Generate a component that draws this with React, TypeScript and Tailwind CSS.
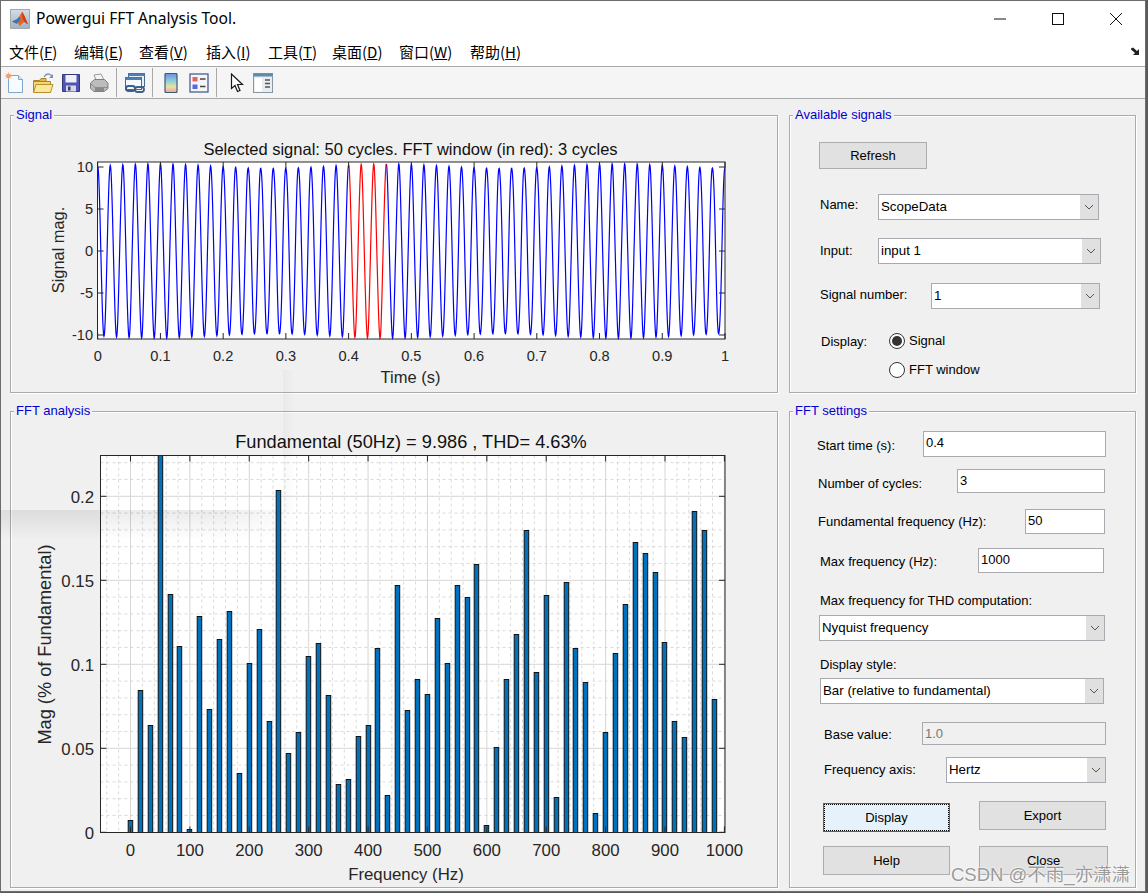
import type { ReactNode } from "react";

const SANS = "[font-family:'Liberation_Sans',Arial,sans-serif]";

const bars = [
  0.0075, 0.085, 0.064, 0.3, 0.142, 0.111, 0.002, 0.1285, 0.0735, 0.115, 0.132, 0.0355, 0.101, 0.121, 0.066, 0.204,
  0.047, 0.06, 0.105, 0.1125, 0.0815, 0.029, 0.032, 0.0575, 0.064, 0.1095, 0.0225, 0.1475, 0.073, 0.091, 0.0825,
  0.1275, 0.1005, 0.147, 0.14, 0.1595, 0.0045, 0.051, 0.0915, 0.118, 0.18, 0.0955, 0.141, 0.021, 0.149, 0.11, 0.0895,
  0.0115, 0.0595, 0.1065, 0.136, 0.173, 0.1665, 0.155, 0.1135, 0.0665, 0.057, 0.191, 0.18, 0.0795,
];

const menus = [
  ["文件(", "F", ")", "w-[65px]"],
  ["编辑(", "E", ")", "w-[65px]"],
  ["查看(", "V", ")", "w-[67px]"],
  ["插入(", "I", ")", "w-[62px]"],
  ["工具(", "T", ")", "w-[64px]"],
  ["桌面(", "D", ")", "w-[67px]"],
  ["窗口(", "W", ")", "w-[71px]"],
  ["帮助(", "H", ")", "w-[60px]"],
];

// signal trace, screen coordinates
const sigX = (t: number) => 97.7 + t * 627.3;
const sigY = (v: number) => 251 - v * 8.4;
const wave = (from: number, to: number) => {
  const pts: string[] = [];
  const n = Math.round((to - from) / 0.0005);
  for (let i = 0; i <= n; i++) {
    const t = from + i * 0.0005;
    let v = 10.1 * Math.cos(2 * Math.PI * 50 * t) + 0.3 * Math.sin(2 * Math.PI * 150 * t + 1.1) * Math.sin(17 * t);
    if (t < 0.0005) v = 9.5;
    pts.push(`${sigX(t).toFixed(2)},${sigY(v).toFixed(2)}`);
  }
  return pts.join(" ");
};

const SignalPlot = () => {
  const xt = [0, 0.1, 0.2, 0.3, 0.4, 0.5, 0.6, 0.7, 0.8, 0.9, 1];
  const yt = [10, 5, 0, -5, -10];
  return (
    <svg viewBox="11 116 766 276" className="block h-[276px] w-[766px]" fontFamily="'Liberation Sans', Arial, sans-serif">
      <rect x="97.5" y="162" width="627.5" height="177" fill="#fff" />
      <polyline points={wave(0, 0.4)} fill="none" stroke="#0000ff" strokeWidth="1.2" />
      <polyline points={wave(0.46, 1)} fill="none" stroke="#0000ff" strokeWidth="1.2" />
      <polyline points={wave(0.4, 0.46)} fill="none" stroke="#ff0000" strokeWidth="1.2" />
      {xt.map((t) => (
        <g key={t}>
          <path d={`M${sigX(t)} 162v6M${sigX(t)} 339v-6`} stroke="#262626" />
          <text x={sigX(t)} y="361" textAnchor="middle" fontSize="14.6" fill="#262626">
            {t}
          </text>
        </g>
      ))}
      {yt.map((v) => (
        <g key={v}>
          <path d={`M97.5 ${sigY(v)}h6M725 ${sigY(v)}h-6`} stroke="#262626" />
          <text x="93" y={sigY(v) + 5} textAnchor="end" fontSize="14.6" fill="#262626">
            {v}
          </text>
        </g>
      ))}
      <rect x="97.5" y="162" width="627.5" height="177" fill="none" stroke="#262626" />
      <text x="410.5" y="155" textAnchor="middle" fontSize="16.5" fill="#111">
        Selected signal: 50 cycles. FFT window (in red): 3 cycles
      </text>
      <text x="410.5" y="383" textAnchor="middle" fontSize="16.5" fill="#262626">
        Time (s)
      </text>
      <text transform="translate(64 250) rotate(-90)" textAnchor="middle" fontSize="16.4" fill="#262626">
        Signal mag.
      </text>
    </svg>
  );
};

const FftPlot = () => {
  const fx = (f: number) => 130.5 + f * 0.5939;
  const fy = (m: number) => 832.3 - m * 1680;
  const majorX = [0, 100, 200, 300, 400, 500, 600, 700, 800, 900, 1000];
  const minorX: number[] = [];
  for (let f = -40; f < 1000; f += 20) if (f % 100 !== 0) minorX.push(f);
  const majorY = [0.05, 0.1, 0.15, 0.2];
  const minorY: number[] = [];
  for (let i = 1; i <= 22; i++) if (i % 5 !== 0) minorY.push(i / 100);
  return (
    <svg viewBox="11 412 766 474" className="block h-[474px] w-[766px]" fontFamily="'Liberation Sans', Arial, sans-serif">
      <rect x="100.5" y="455.5" width="624.5" height="377" fill="#fff" />
      {minorX.map((f) => (
        <line key={f} x1={fx(f)} x2={fx(f)} y1="455.5" y2="832.5" stroke="#dadada" strokeDasharray="3 3" />
      ))}
      {minorY.map((m) => (
        <line key={m} x1="100.5" x2="725" y1={fy(m)} y2={fy(m)} stroke="#dadada" strokeDasharray="3 3" />
      ))}
      {majorX.map((f) => (
        <line key={f} x1={fx(f)} x2={fx(f)} y1="455.5" y2="832.5" stroke="#d6d6d6" />
      ))}
      {majorY.map((m) => (
        <line key={m} x1="100.5" x2="725" y1={fy(m)} y2={fy(m)} stroke="#d6d6d6" />
      ))}
      <clipPath id="fftclip">
        <rect x="100.5" y="455.5" width="624.5" height="377" />
      </clipPath>
      {bars.map((m, k) => {
        const top = Math.round(Math.max(fy(m), 450)) + 0.5;
        return (
          <rect
            key={k}
            x={Math.floor(130.5 + k * 9.898 - 2) + 0.2}
            y={top}
            width="4.5"
            height={832.5 - top}
            fill="#0072bd"
            stroke="#111"
            strokeWidth="1"
            clipPath="url(#fftclip)"
          />
        );
      })}
      {majorX.map((f) => (
        <g key={f}>
          <path d={`M${fx(f)} 455.5v6M${fx(f)} 832.5v-6`} stroke="#262626" />
          <text x={fx(f)} y="856" textAnchor="middle" fontSize="16.8" fill="#262626">
            {f}
          </text>
        </g>
      ))}
      {[0, ...majorY].map((m) => (
        <g key={m}>
          <path d={`M100.5 ${fy(m)}h6M725 ${fy(m)}h-6`} stroke="#262626" />
          <text x="94" y={fy(m) + 7} textAnchor="end" fontSize="16.8" fill="#262626">
            {m}
          </text>
        </g>
      ))}
      <rect x="100.5" y="455.5" width="624.5" height="377" fill="none" stroke="#262626" />
      <text x="411" y="448" textAnchor="middle" fontSize="18.2" fill="#111">
        Fundamental (50Hz) = 9.986 , THD= 4.63%
      </text>
      <text x="406" y="880" textAnchor="middle" fontSize="16.8" fill="#262626">
        Frequency (Hz)
      </text>
      <text transform="translate(51 644.500) rotate(-90)" textAnchor="middle" fontSize="18.2" fill="#262626">
        Mag (% of Fundamental)
      </text>
    </svg>
  );
};

const Panel = ({ title, className, children }: { title: string; className: string; children: ReactNode }) => (
  <div
    className={`relative border border-[#ababab] shadow-[inset_1px_1px_0_#fff,1px_1px_0_#fff] ${className}`}
  >
    <span className="absolute left-[3px] top-[-9px] bg-[#f0f0f0] px-[2px] text-[13px] leading-[16px] text-[#0000d0]">
      {title}
    </span>
    {children}
  </div>
);

const Label = ({ className, children }: { className: string; children: ReactNode }) => (
  <span className={`shrink-0 text-[13px] leading-[16px] text-black ${className}`}>{children}</span>
);

const Combo = ({ className, value }: { className: string; value: string }) => (
  <div className={`flex shrink-0 items-stretch border border-[#a9a9b0] bg-white ${className}`}>
    <span className="flex-1 pl-[2px] text-[13.3px] leading-[24px] text-black">{value}</span>
    <span className="flex w-[18px] items-center justify-center bg-[#e0e0e0]">
      <svg width="10" height="6" viewBox="0 0 10 6">
        <path d="M1 1l4 4 4-4" fill="none" stroke="#555" strokeWidth="1" />
      </svg>
    </span>
  </div>
);

const Field = ({ className, value, off }: { className: string; value: string; off?: boolean }) => (
  <div
    className={`shrink-0 border border-[#a9a9b0] pl-[2px] text-[13px] leading-[22px] ${
      off ? "bg-[#f0f0f0] text-[#777]" : "bg-white text-black"
    } ${className}`}
  >
    {value}
  </div>
);

const Btn = ({ className, children }: { className: string; children: ReactNode }) => (
  <button className={`shrink-0 border border-[#adadad] bg-[#e1e1e1] text-center text-[13px] text-black ${className}`}>
    {children}
  </button>
);

const Sep = ({ className }: { className: string }) => <div className={`h-[29px] w-px bg-[#a8a8a8] ${className}`} />;

const Cell = ({ className, children }: { className: string; children: ReactNode }) => (
  <div className={`flex shrink-0 justify-center ${className}`}>{children}</div>
);

const MatlabLogo = () => (
  <svg width="20" height="20" viewBox="0 0 20 20">
    <defs>
      <linearGradient id="tile" x1="0" y1="0" x2="0" y2="1">
        <stop offset="0" stopColor="#d5dde6" />
        <stop offset="1" stopColor="#9fb2c6" />
      </linearGradient>
    </defs>
    <rect x="0.5" y="0.5" width="19" height="19" fill="url(#tile)" stroke="#a8a8a8" />
    <path d="M2 12.5l5-2.2 2.2-2.6 3-5.2 2.5 5 3.3 8-3.8-2.8-2 2-2.4 2.3-2-3.2z" fill="#e8622a" />
    <path d="M2 12.5l5-2.2 2.2-2.6 1.3 2.2-2.6 3.6-1 1.6z" fill="#3277b5" />
    <path d="M12.2 2.5l2.5 5 3.3 8-3.8-2.8-1.8-4.6z" fill="#c7401c" />
  </svg>
);

const ToolIcons = {
  page: (
    <svg width="22" height="22" viewBox="0 0 22 22">
      <path d="M4.5 3.5h10l4 4v13h-14z" fill="#f6fbff" stroke="#7fa6cf" />
      <path d="M14.5 3.5v4h4" fill="#d6e6f5" stroke="#7fa6cf" />
      <circle cx="4.5" cy="4" r="2.2" fill="#f08a50" />
      <path d="M4.5 0.5v7M1 4h7M2 1.5l5 5M7 1.5l-5 5" stroke="#f5a676" strokeWidth="0.8" />
    </svg>
  ),
  folder: (
    <svg width="22" height="22" viewBox="0 0 22 22">
      <path d="M1.5 8.5h6l1.5-2h5v3h-12.500z" fill="#e8b93e" stroke="#a9862c" />
      <path d="M1.500 20.500v-11h17v11z" fill="#f3d775" stroke="#a9862c" />
      <path d="M1.500 20.500l2.500-8h17l-2.500 8z" fill="#fbe89a" stroke="#b5922f" />
      <path d="M12 5c1.500-2.500 4-3.500 6-2.500l2 1.500" fill="none" stroke="#7c93ad" strokeWidth="1.300" />
      <path d="M21 2v4h-4z" fill="#7c93ad" />
    </svg>
  ),
  floppy: (
    <svg width="20" height="20" viewBox="0 0 20 20">
      <path d="M1.500 1.500h17v17h-17z" fill="#4f55b0" stroke="#33387c" />
      <rect x="4.500" y="2" width="11" height="7.500" fill="#eef1fb" />
      <rect x="5" y="12.500" width="10" height="6" fill="#d5d8e6" />
      <rect x="7" y="13.500" width="2.500" height="4" fill="#33387c" />
    </svg>
  ),
  printer: (
    <svg width="20" height="20" viewBox="0 0 20 20">
      <path d="M5 2l7-1 3 6H7z" fill="#f2f4f6" stroke="#9a9a9a" />
      <path d="M1.500 10l4-3.500h10l3.500 3.500v5.500l-4 3h-10l-3.500-3z" fill="#bcbcbc" stroke="#7f7f7f" />
      <path d="M2 11l4 3.500h13" fill="none" stroke="#8d8d8d" />
      <rect x="6" y="15" width="9" height="3" fill="#8a8a8a" />
    </svg>
  ),
  link: (
    <svg width="22" height="22" viewBox="0 0 22 22">
      <rect x="4.500" y="1.500" width="16" height="13" fill="#e9eef5" stroke="#4c678a" />
      <rect x="4.500" y="1.500" width="16" height="2.500" fill="#4c7fb5" />
      <rect x="1.500" y="5.500" width="16" height="12" fill="#f4f7fb" stroke="#4c678a" />
      <rect x="1.500" y="5.500" width="16" height="2.500" fill="#4c7fb5" />
      <rect x="2" y="14" width="9" height="5" rx="2.500" fill="none" stroke="#3d5f8a" strokeWidth="1.800" />
      <rect x="11" y="15" width="9" height="5" rx="2.500" fill="none" stroke="#3d5f8a" strokeWidth="1.800" />
    </svg>
  ),
  colorbar: (
    <svg width="14" height="20" viewBox="0 0 14 20">
      <defs>
        <linearGradient id="cbar" x1="0" y1="0" x2="0" y2="1">
          <stop offset="0" stopColor="#6a8fe0" />
          <stop offset="0.4" stopColor="#8fd0d8" />
          <stop offset="0.7" stopColor="#e9e3a0" />
          <stop offset="1" stopColor="#f0a0a0" />
        </linearGradient>
      </defs>
      <rect x="1" y="0.500" width="12" height="19" rx="1" fill="url(#cbar)" stroke="#3f5878" strokeWidth="1.200" />
    </svg>
  ),
  legend: (
    <svg width="20" height="20" viewBox="0 0 20 20">
      <rect x="1" y="1" width="18" height="18" fill="#f5f6fb" stroke="#4a5f8f" strokeWidth="1.300" />
      <rect x="3.500" y="4" width="5" height="4.500" fill="#e8605f" />
      <rect x="3.500" y="11.500" width="5" height="4.500" fill="#5a68e0" />
      <path d="M11 6h5.500M11 13.500h5.500" stroke="#444" strokeWidth="1.300" />
    </svg>
  ),
  pointer: (
    <svg width="14" height="20" viewBox="0 0 14 20">
      <path d="M1.500 1v14.500l3.500-3 2.500 6 2.500-1-2.500-6h5z" fill="#fff" stroke="#1a1a1a" strokeWidth="1.200" />
    </svg>
  ),
  tools: (
    <svg width="20" height="20" viewBox="0 0 20 20">
      <rect x="0.500" y="0.500" width="19" height="19" fill="#e9edf0" stroke="#8a97a3" />
      <rect x="0.500" y="0.500" width="19" height="3" fill="#5f8aa8" />
      <rect x="2" y="5" width="7" height="13.500" fill="#fff" />
      <path d="M12 7h5M12 10.500h5M12 14h5" stroke="#555" strokeWidth="1.600" />
    </svg>
  ),
};

export default function App() {
  return (
    <div className={`relative h-[893px] w-[1148px] overflow-hidden bg-[#5a5a5a] ${SANS}`}>
      <div className="flex h-[892px] w-[1146px] flex-col border-[1px] border-[#6d6d6d] bg-[#f0f0f0]">
        {/* title bar */}
        <div className="flex h-[41px] shrink-0 items-center bg-white pb-[6px] pl-[9px]">
          <MatlabLogo />
          <span className="ml-[6px] text-[15.6px] text-black [font-family:'Noto_Sans',sans-serif]">
            Powergui FFT Analysis Tool.
          </span>
          <div className="ml-auto flex items-center pr-[22px]">
            <svg width="14" height="14" viewBox="0 0 14 14" className="mr-[44px]">
              <path d="M1 7h12" stroke="#111" />
            </svg>
            <svg width="14" height="14" viewBox="0 0 14 14" className="mr-[44px]">
              <rect x="1.500" y="1.500" width="11" height="11" fill="none" stroke="#111" />
            </svg>
            <svg width="14" height="14" viewBox="0 0 14 14">
              <path d="M1 1l12 12M13 1L1 13" stroke="#111" />
            </svg>
          </div>
        </div>
        {/* menu */}
        <div className="flex h-[25px] shrink-0 items-center border-b border-[#a8a8a8] bg-white pb-[4px] pl-[8px] text-[15px] text-black [font-family:'Noto_Sans_CJK_SC','Noto_Sans',sans-serif]">
          {menus.map(([a, k, b, w]) => (
            <span key={k} className={`shrink-0 ${w}`}>
              {a}
              <span className="underline">{k}</span>
              {b}
            </span>
          ))}
          <svg width="12" height="10" viewBox="0 0 12 10" className="ml-auto mr-[3px]">
            <path d="M1 1.500l2-1 4 3.500 2-2v6h-6l2-2-4-3.500z" fill="#222" />
          </svg>
        </div>
        {/* toolbar */}
        <div className="flex h-[32px] shrink-0 items-center border-b border-[#a8a8a8] bg-[#f5f5f5]">
          <Cell className="w-[28px]">{ToolIcons.page}</Cell>
          <Cell className="w-[28px]">{ToolIcons.folder}</Cell>
          <Cell className="w-[28px]">{ToolIcons.floppy}</Cell>
          <Cell className="w-[28px]">{ToolIcons.printer}</Cell>
          <Sep className="ml-[3px]" />
          <Cell className="w-[35px]">{ToolIcons.link}</Cell>
          <Sep className="" />
          <Cell className="ml-[4px] w-[28px]">{ToolIcons.colorbar}</Cell>
          <Cell className="w-[28px]">{ToolIcons.legend}</Cell>
          <Sep className="ml-[3px]" />
          <Cell className="ml-[6px] w-[28px]">{ToolIcons.pointer}</Cell>
          <Cell className="w-[24px]">{ToolIcons.tools}</Cell>
        </div>
        {/* body */}
        <div className="grid grid-cols-[768px_347px] grid-rows-[278px_477px] gap-x-[11px] gap-y-[18px] pl-[9px] pt-[16px]">
          <Panel title="Signal" className="">
            <SignalPlot />
          </Panel>
          <Panel title="Available signals" className="flex flex-col">
            <Btn className="ml-[29px] mt-[26px] h-[27px] w-[108px]">Refresh</Btn>
            <div className="ml-[30px] mt-[25px] flex items-center">
              <Label className="mb-[4px] w-[58px]">Name:</Label>
              <Combo className="h-[26px] w-[221px]" value="ScopeData" />
            </div>
            <div className="ml-[30px] mt-[18px] flex items-center">
              <Label className="w-[58px]">Input:</Label>
              <Combo className="h-[26px] w-[223px]" value="input 1" />
            </div>
            <div className="ml-[30px] mt-[19px] flex items-center">
              <Label className="mb-[2px] w-[111px]">Signal number:</Label>
              <Combo className="h-[26px] w-[169px]" value="1" />
            </div>
            <div className="ml-[31px] mt-[24px] flex items-start">
              <Label className="w-[68px] pt-[1px]">Display:</Label>
              <div className="flex flex-col gap-[13px]">
                <div className="flex items-center gap-[4px]">
                  <span className="flex h-[16px] w-[16px] items-center justify-center rounded-full border border-[#333] bg-white">
                    <span className="h-[10px] w-[10px] rounded-full bg-[#333]" />
                  </span>
                  <Label className="">Signal</Label>
                </div>
                <div className="flex items-center gap-[4px]">
                  <span className="h-[16px] w-[16px] rounded-full border border-[#333] bg-white" />
                  <Label className="">FFT window</Label>
                </div>
              </div>
            </div>
          </Panel>
          <Panel title="FFT analysis" className="">
            <FftPlot />
          </Panel>
          <Panel title="FFT settings" className="flex flex-col">
            <div className="ml-[27px] mt-[19px] flex items-center">
              <Label className="mt-[3px] w-[106px]">Start time (s):</Label>
              <Field className="h-[26px] w-[183px]" value="0.4" />
            </div>
            <div className="ml-[28px] mt-[12px] flex items-center">
              <Label className="mt-[5px] w-[139px]">Number of cycles:</Label>
              <Field className="h-[24px] w-[148px]" value="3" />
            </div>
            <div className="ml-[28px] mt-[16px] flex items-center">
              <Label className="w-[207px]">Fundamental frequency (Hz):</Label>
              <Field className="h-[25px] w-[80px]" value="50" />
            </div>
            <div className="ml-[30px] mt-[14px] flex items-center">
              <Label className="mt-[2px] w-[158px]">Max frequency (Hz):</Label>
              <Field className="h-[25px] w-[126px]" value="1000" />
            </div>
            <Label className="ml-[30px] mt-[20px]">Max frequency for THD computation:</Label>
            <Combo className="ml-[29px] mt-[6px] h-[26px] w-[286px]" value="Nyquist frequency" />
            <Label className="ml-[30px] mt-[16px]">Display style:</Label>
            <Combo className="ml-[30px] mt-[5px] h-[26px] w-[284px]" value="Bar (relative to fundamental)" />
            <div className="ml-[34px] mt-[18px] flex items-center">
              <Label className="mt-[3px] w-[98px]">Base value:</Label>
              <Field className="h-[23px] w-[184px]" value="1.0" off />
            </div>
            <div className="ml-[34px] mt-[12px] flex items-center">
              <Label className="w-[122px]">Frequency axis:</Label>
              <Combo className="h-[26px] w-[160px]" value="Hertz" />
            </div>
            <div className="ml-[33px] mt-[18px] flex items-start gap-[29px]">
              <button className="mt-[2px] h-[29px] w-[127px] shrink-0 border border-[#0078d7] bg-[#e5f1fb] text-center text-[13px] text-black outline-1 outline-offset-[-2px] outline-dotted outline-black">
                Display
              </button>
              <Btn className="h-[29px] w-[127px]">Export</Btn>
            </div>
            <div className="ml-[33px] mt-[14px] flex items-start gap-[29px]">
              <Btn className="h-[29px] w-[127px]">Help</Btn>
              <Btn className="h-[29px] w-[129px]">Close</Btn>
            </div>
          </Panel>
        </div>
      </div>
      {/* stray window shadows and the watermark lie over the capture */}
      <div className="pointer-events-none absolute left-0 top-[510px] h-[30px] w-[296px] bg-gradient-to-b from-black/8 to-transparent [mask-image:linear-gradient(to_right,black_75%,transparent)]" />
      <div className="pointer-events-none absolute left-[283px] top-[370px] h-[140px] w-[12px] bg-gradient-to-r from-black/[0.03] to-transparent" />
      <span className="pointer-events-none absolute left-[951px] top-[864px] whitespace-nowrap text-[18.5px] leading-[22px] text-[#9a9a9a] [font-family:'Liberation_Sans','Noto_Sans_CJK_SC',sans-serif] [text-shadow:0_0_2px_#fff,0_0_2px_#fff]">
        CSDN @不雨_亦潇潇
      </span>
    </div>
  );
}
